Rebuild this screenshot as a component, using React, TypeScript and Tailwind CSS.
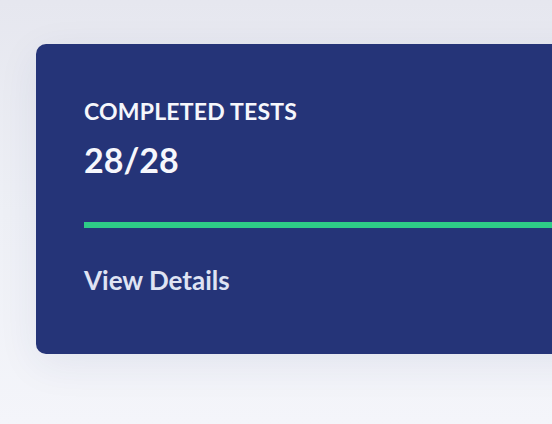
import React from "react";

export default function App() {
  return (
    <div
      className="w-[552px] h-[424px] overflow-hidden bg-gradient-to-b from-[#e6e7ef] via-[#eef0f6] to-[#f4f5fa] pt-[44px] pl-[36px]"
      style={{ fontFamily: "Lato, 'Noto Sans', sans-serif" }}
    >
      <div className="w-[640px] h-[310px] rounded-[10px] bg-[#253478] shadow-[0_10px_40px_rgba(40,50,110,0.08)] pl-[48px] pt-[52px]">
        <div className="text-[23px] leading-[30px] font-bold tracking-[0.2px] text-[#f6f7fc]">
          COMPLETED TESTS
        </div>
        <div className="mt-[14px] text-[34px] leading-[40px] font-bold text-[#f6f7fc]">
          28/28
        </div>
        <div className="mt-[42px] h-[6px] bg-[#2ecc87]" />
        <div className="mt-[36px] text-[26px] leading-[32px] font-bold text-[#dfe3f3]">
          View Details
        </div>
      </div>
    </div>
  );
}
